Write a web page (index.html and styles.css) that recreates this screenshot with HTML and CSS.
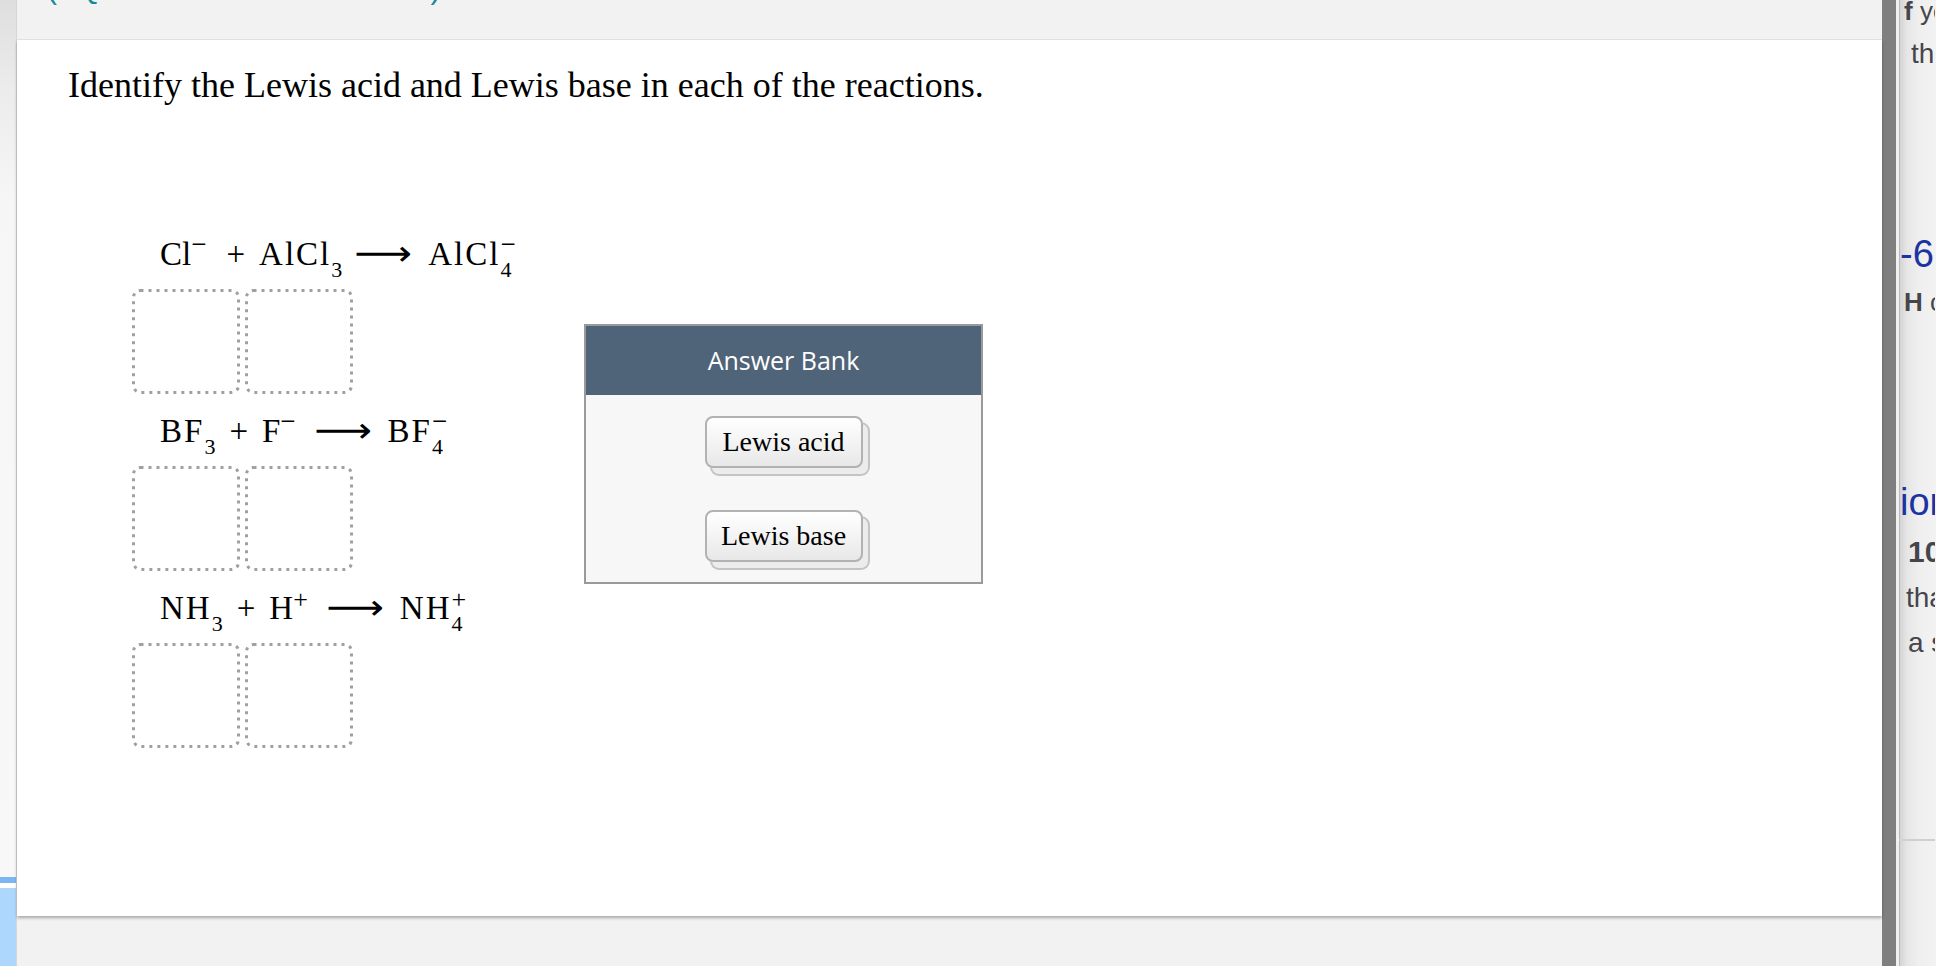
FILE: index.html
```html
<!DOCTYPE html>
<html lang="en">
<head>
<meta charset="utf-8">
<title>Lewis acids and bases</title>
<link rel="stylesheet" href="styles.css">
</head>
<body>
<div class="app">
  <div class="leftstrip">
    <div class="tab-dark"></div>
    <div class="tab-gap"></div>
    <div class="tab-light"></div>
  </div>

  <div class="main">
    <div class="topband"><div class="crumb">( Question 14 of 24 )</div></div>

    <div class="panel">
      <h1 class="prompt">Identify the Lewis acid and Lewis base in each of the reactions.</h1>

      <div class="work">
        <div class="reactions">
          <div class="reaction">
            <div class="eq"><span>Cl</span><sup class="chg neg">−</sup><span class="op">+</span><span class="wide">AlCl</span><sub>3</sub><span class="arrow">⟶</span><span class="wide">AlCl</span><sub>4</sub><sup class="chg neg back">−</sup></div>
            <div class="slots">
              <svg class="slot" viewBox="0 0 108 105"><rect x="1.5" y="1.5" width="105" height="102" rx="7"/></svg>
              <svg class="slot" viewBox="0 0 108 105"><rect x="1.5" y="1.5" width="105" height="102" rx="7"/></svg>
            </div>
          </div>
          <div class="reaction">
            <div class="eq"><span class="wide">BF</span><sub>3</sub><span class="op">+</span><span>F</span><sup class="chg neg">−</sup><span class="arrow">⟶</span><span class="wide">BF</span><sub>4</sub><sup class="chg neg back">−</sup></div>
            <div class="slots">
              <svg class="slot" viewBox="0 0 108 105"><rect x="1.5" y="1.5" width="105" height="102" rx="7"/></svg>
              <svg class="slot" viewBox="0 0 108 105"><rect x="1.5" y="1.5" width="105" height="102" rx="7"/></svg>
            </div>
          </div>
          <div class="reaction">
            <div class="eq"><span class="wide">NH</span><sub>3</sub><span class="op">+</span><span>H</span><sup class="chg pos">+</sup><span class="arrow">⟶</span><span class="wide">NH</span><sub>4</sub><sup class="chg pos back">+</sup></div>
            <div class="slots">
              <svg class="slot" viewBox="0 0 108 105"><rect x="1.5" y="1.5" width="105" height="102" rx="7"/></svg>
              <svg class="slot" viewBox="0 0 108 105"><rect x="1.5" y="1.5" width="105" height="102" rx="7"/></svg>
            </div>
          </div>
        </div>

        <div class="bank">
          <div class="bank-head">Answer Bank</div>
          <div class="bank-body">
            <div class="chip">Lewis acid</div>
            <div class="chip">Lewis base</div>
          </div>
        </div>
      </div>
    </div>

    <div class="bottomband"></div>
  </div>

  <div class="vbar"></div>

  <div class="sidebar">
    <div class="s1"><b>f</b> your</div>
    <div class="s2">the</div>
    <div class="s3">-6</div>
    <div class="s4"><b>H</b> c</div>
    <div class="s5">ion</div>
    <div class="s6">10</div>
    <div class="s7">tha</div>
    <div class="s8">a s</div>
    <div class="s-rule"></div>
  </div>
</div>
</body>
</html>
```

FILE: styles.css
```css
html, body {
  margin: 0;
  padding: 0;
}

body {
  width: 1936px;
  height: 966px;
  overflow: hidden;
  background: #f2f2f2;
  font-family: "Liberation Serif", "Times New Roman", serif;
  color: #000;
}

.app {
  display: flex;
  width: 1936px;
  height: 966px;
}

/* left edge strip */
.leftstrip {
  width: 16px;
  flex: none;
  border-right: 1px solid #d6d6d6;
  background: linear-gradient(#dedede 0, #ececec 90px, #f6f6f6 200px, #f8f8f8 100%);
  display: flex;
  flex-direction: column;
  justify-content: flex-end;
}
.tab-dark { height: 6px; background: #7cb7f3; }
.tab-gap { height: 5px; background: #ffffff; }
.tab-light { height: 78px; background: #aed7fd; }

/* main column */
.main {
  width: 1865px;
  flex: none;
  display: flex;
  flex-direction: column;
}

.topband {
  height: 39px;
  flex: none;
  background: #f2f2f2;
  border-bottom: 1px solid #e4e4e4;
  overflow: hidden;
}
.crumb {
  margin: -29px 0 0 30px;
  font: 30px/36px "Liberation Sans", Arial, sans-serif;
  color: #13899c;
  letter-spacing: 6px;
}

.panel {
  height: 876px;
  flex: none;
  box-sizing: border-box;
  background: #ffffff;
  padding: 24px 0 0 51px;
  box-shadow: 0 2px 3px rgba(0, 0, 0, 0.3);
  position: relative;
  z-index: 1;
}

.prompt {
  margin: 0;
  font-weight: normal;
  font-size: 36px;
  line-height: 42px;
  font-family: "Liberation Serif", "Times New Roman", serif;
}

.work {
  display: flex;
  align-items: flex-start;
  margin: 130px 0 0 64px;
}

.reactions {
  width: 400px;
  flex: none;
}

.reaction + .reaction {
  margin-top: 19px;
}

.eq {
  height: 36px;
  line-height: 36px;
  font-size: 33px;
  padding-left: 28px;
  white-space: nowrap;
}

.wide {
  letter-spacing: 2px;
}

.eq sub {
  font-size: 22px;
  line-height: 0;
  vertical-align: -12px;
}

.eq .chg {
  font-size: 26px;
  line-height: 0;
  margin-right: 6px;
}
.eq .neg { vertical-align: 12px; font-size: 27px; }
.eq .pos { vertical-align: 11px; }
.eq .chg.back {
  margin-left: -11px;
  margin-right: 0;
}

.op {
  display: inline-block;
  margin: 0 14px 0 14px;
}

.arrow {
  display: inline-block;
  width: 50px;
  margin: 0 20px 0 16px;
  font-family: "DejaVu Sans", sans-serif;
  font-size: 35px;
  line-height: 0;
  text-align: center;
  transform: scaleX(1.15);
}

.slots {
  display: flex;
  gap: 5px;
  margin-top: 17px;
}

.slot {
  width: 108px;
  height: 105px;
  display: block;
}
.slot rect {
  fill: none;
  stroke: #a0a0a0;
  stroke-width: 3;
  stroke-dasharray: 3 5;
}

/* answer bank */
.bank {
  width: 399px;
  flex: none;
  box-sizing: border-box;
  margin: 88px 0 0 52px;
  border: 2px solid #9a9a9a;
  background: #f7f7f7;
}

.bank-head {
  height: 69px;
  line-height: 69px;
  background: #4f6479;
  color: #ffffff;
  text-align: center;
  font-family: "Open Sans", "Noto Sans", sans-serif;
  font-size: 25px;
}

.bank-body {
  display: flex;
  flex-direction: column;
  align-items: center;
  gap: 42px;
  padding: 21px 0 20px;
}

.chip {
  width: 158px;
  height: 52px;
  box-sizing: border-box;
  border: 2px solid #b2b2b2;
  border-radius: 8px;
  background: linear-gradient(#ffffff, #e8e8e8);
  box-shadow: 6px 7px 0 -1px #ececec, 6px 7px 0 1px #c4c4c4;
  font-size: 28px;
  line-height: 48px;
  text-align: center;
  color: #000;
}

.bottomband {
  flex: 1;
  background: #f2f2f2;
}

/* dark divider */
.vbar {
  width: 14px;
  flex: none;
  background: #7f7f7f;
}

/* clipped sidebar on the right */
.sidebar {
  width: 36px;
  flex: none;
  border-left: 3px solid #f0f0f0;
  box-shadow: inset 1px 0 0 #b8b8b8;
  background: linear-gradient(90deg, #d4d4d4 1px, #e6e6e6 8px, #efefef 20px, #f2f2f2 100%);
  overflow: hidden;
  white-space: nowrap;
  font-family: "Liberation Sans", Arial, sans-serif;
  color: #45464c;
  line-height: 1;
}
.sidebar b { font-weight: bold; }

.s1 { font-size: 26px; margin: -2px 0 0 5px; }
.s2 { font-size: 28px; margin: 16px 0 0 12px; }
.s3 { font-size: 38px; margin: 167px 0 0 1px; color: #1c33a2; }
.s4 { font-size: 26px; margin: 16px 0 0 5px; }
.s5 { font-size: 38px; margin: 168px 0 0 1px; color: #1c33a2; }
.s6 { font-size: 30px; margin: 16px 0 0 9px; font-weight: bold; }
.s7 { font-size: 28px; margin: 17px 0 0 7px; }
.s8 { font-size: 28px; margin: 17px 0 0 9px; }
.s-rule { height: 0; border-top: 2px solid #cfcfd4; margin-top: 182px; }
```
